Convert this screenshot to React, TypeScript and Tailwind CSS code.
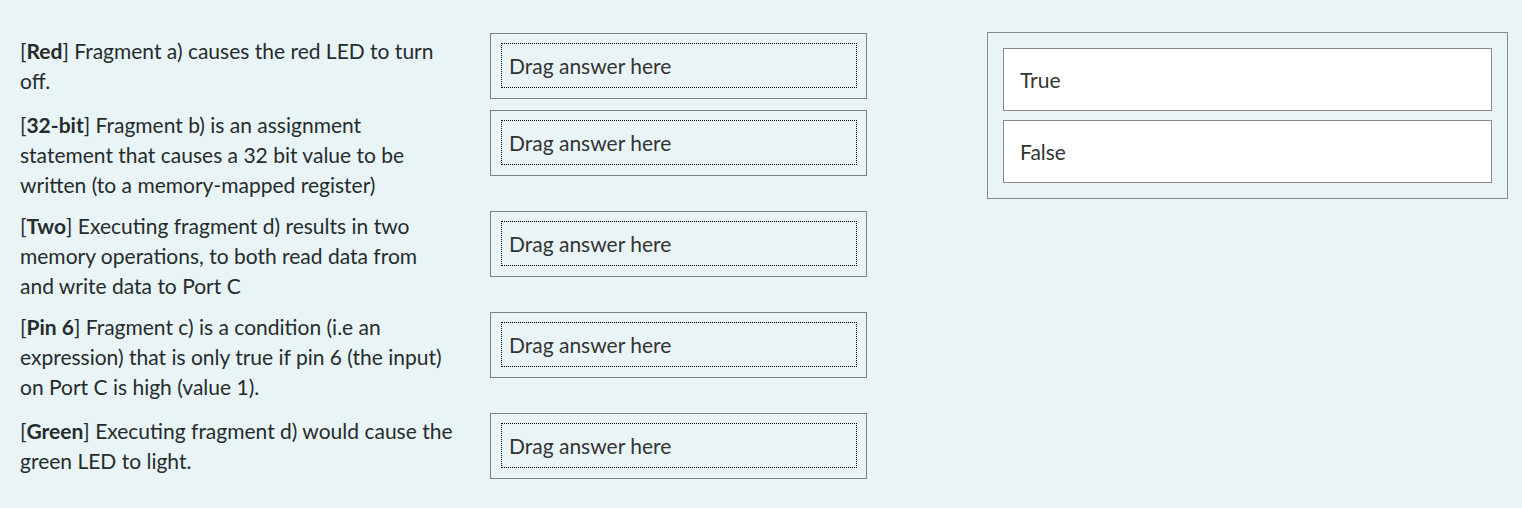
// Drag-and-drop matching question

const rows: { tag: string; lines: string[] }[] = [
  { tag: 'Red', lines: [' Fragment a) causes the red LED to turn', 'off.'] },
  {
    tag: '32-bit',
    lines: [
      ' Fragment b) is an assignment',
      'statement that causes a 32 bit value to be',
      'written (to a memory-mapped register)',
    ],
  },
  {
    tag: 'Two',
    lines: [
      ' Executing fragment d) results in two',
      'memory operations, to both read data from',
      'and write data to Port C',
    ],
  },
  {
    tag: 'Pin 6',
    lines: [
      ' Fragment c) is a condition (i.e an',
      'expression) that is only true if pin 6 (the input)',
      'on Port C is high (value 1).',
    ],
  },
  {
    tag: 'Green',
    lines: [' Executing fragment d) would cause the', 'green LED to light.'],
  },
];

function DropBox() {
  return (
    <div className="w-[377px] h-[66px] shrink-0 border border-[#808080] pt-[9px] pb-[10px] pl-[10px] pr-[9px]">
      <div className="h-full flex items-center border border-dotted border-black px-[7px] text-[#333] whitespace-nowrap">
        Drag answer here
      </div>
    </div>
  );
}

function Choice({ label }: { label: string }) {
  return (
    <div className="h-[63px] flex items-center border border-[#8a8a8a] bg-white pl-4 text-[#333]">
      {label}
    </div>
  );
}

export default function App() {
  return (
    <div className="min-h-screen bg-[#e8f4f6] text-[#262b2c] font-['Source_Sans_Pro',Lato,sans-serif] text-[21px] leading-[30px]">
      <div className="flex items-start pt-[32px] pl-5">
        <div className="flex flex-col gap-[11px] mt-px">
          {rows.map((row) => (
            <div key={row.tag} className="flex items-start gap-2">
              <div className="w-[462px] self-center whitespace-nowrap">
                {row.lines.map((line, i) => (
                  <div key={i}>
                    {i === 0 && (
                      <>
                        [<b className="font-bold">{row.tag}</b>]
                      </>
                    )}
                    {line}
                  </div>
                ))}
              </div>
              <DropBox />
            </div>
          ))}
        </div>

        <div className="ml-[120px] w-[521px] border border-[#8a8a8a] p-[15px] flex flex-col gap-[9px]">
          <Choice label="True" />
          <Choice label="False" />
        </div>
      </div>
    </div>
  );
}
